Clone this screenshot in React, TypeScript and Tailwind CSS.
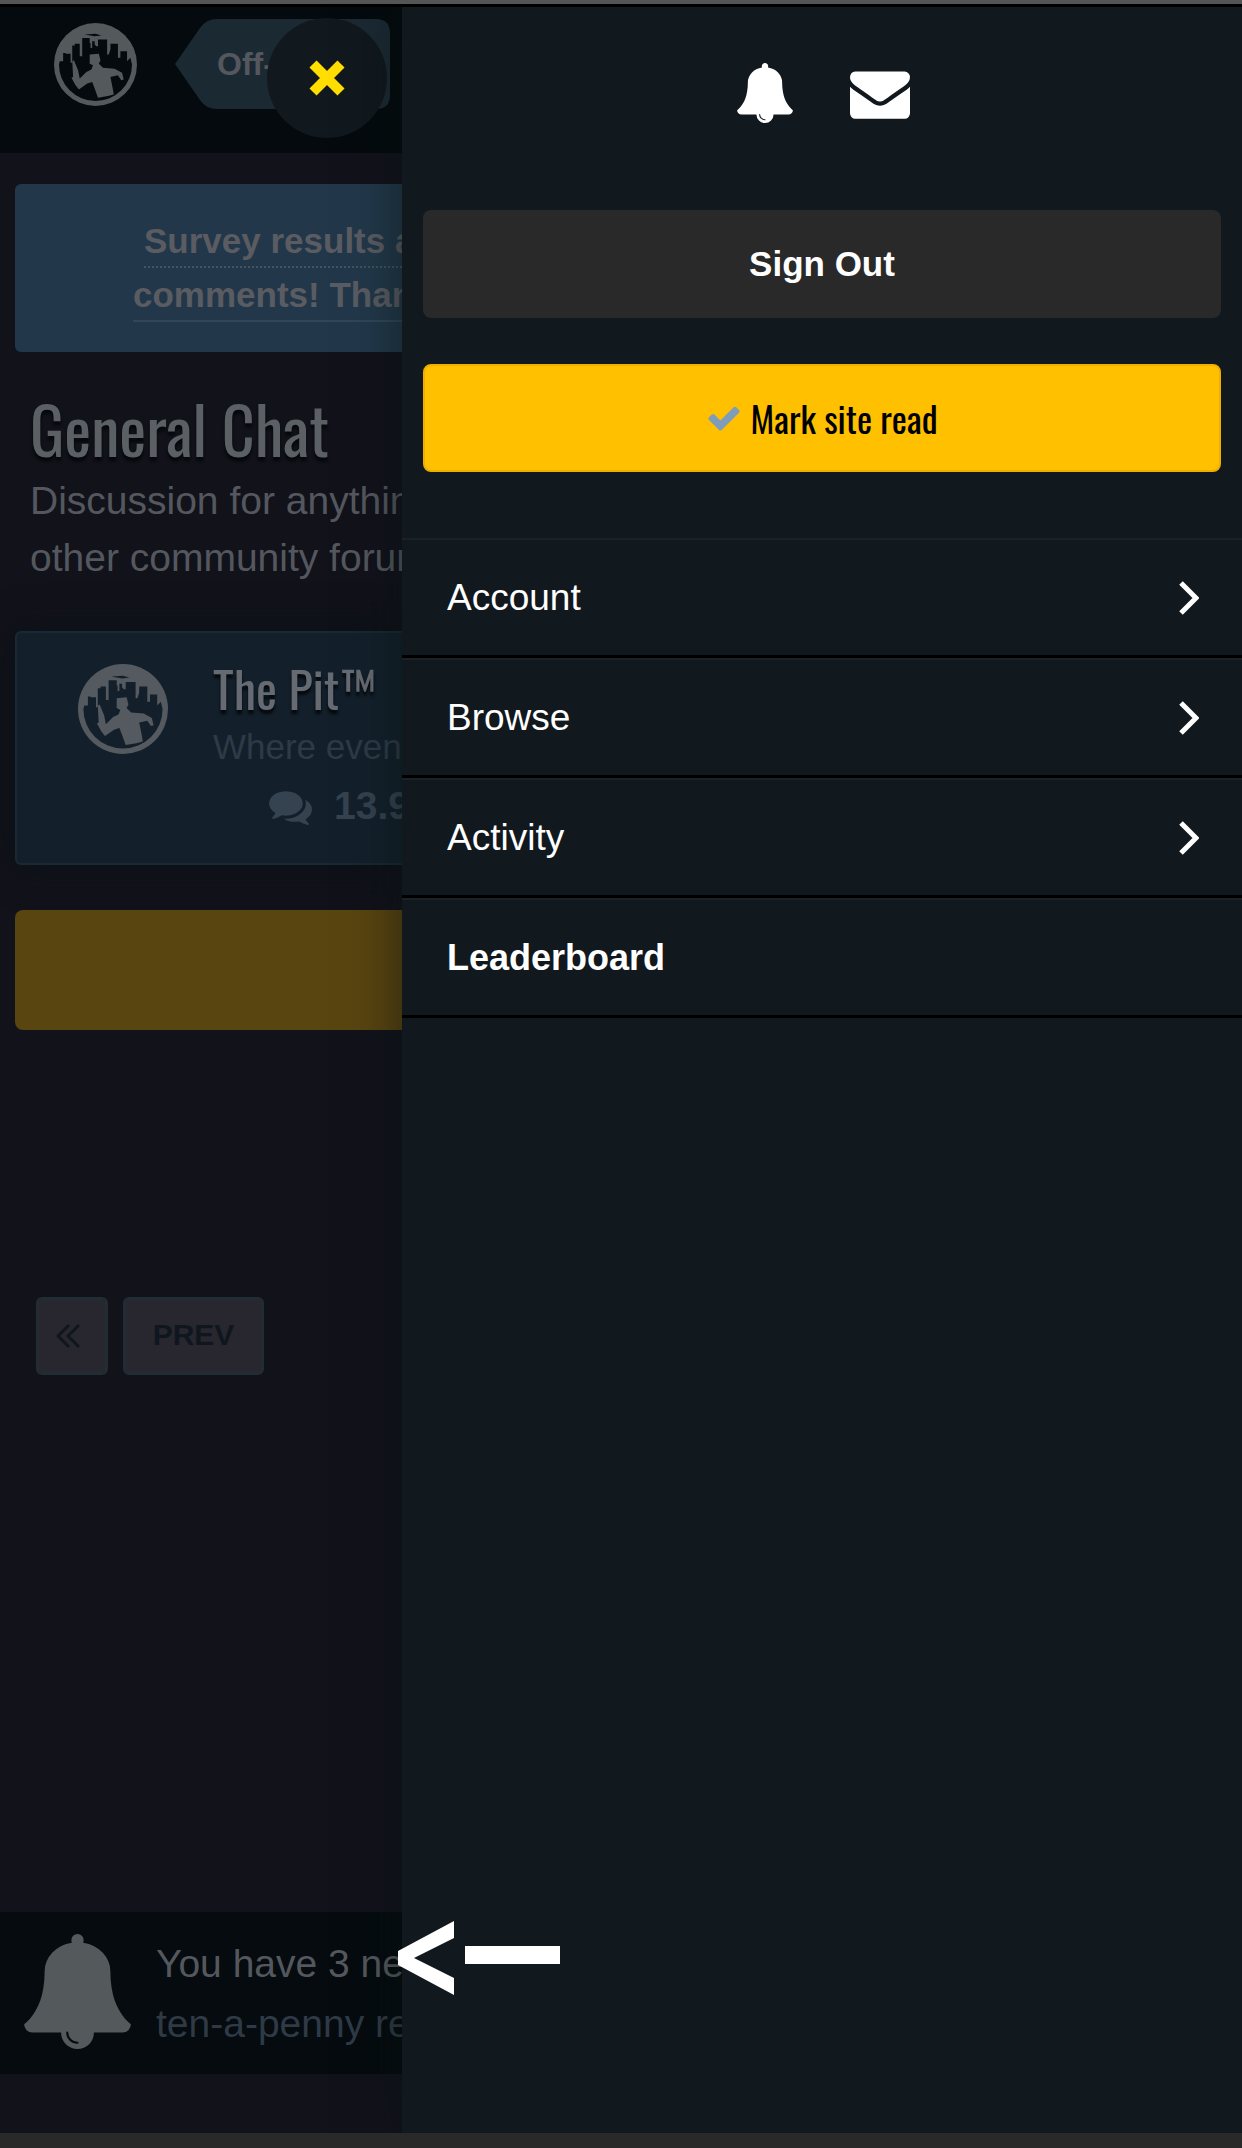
import type { ReactNode } from 'react';

const MENU: { label: string; expandable: boolean }[] = [
  { label: 'Account', expandable: true },
  { label: 'Browse', expandable: true },
  { label: 'Activity', expandable: true },
  { label: 'Leaderboard', expandable: false },
];

const BELL =
  'M912 1696q0-16-16-16-59 0-101.500-42.500t-42.500-101.500q0-16-16-16t-16 16q0 73 51.500 124.500t124.500 51.500q16 0 16-16zm816-288q0 52-38 90t-90 38h-448q0 106-75 181t-181 75-181-75-75-181h-448q-52 0-90-38t-38-90q50-42 91-88t85-119.500 74.500-158.500 50-206 19.500-260q0-152 117-282.500t307-158.500q-8-19-8-39 0-40 28-68t68-28 68 28 28 68q0 20-8 39 190 28 307 158.500t117 282.500q0 139 19.500 260t50 206 74.500 158.500 85 119.500 91 88z';
const ENVELOPE =
  'M1792 710v794q0 66-47 113t-113 47h-1472q-66 0-113-47t-47-113v-794q44 49 101 87 362 246 497 345 57 42 92.500 65.500t94.500 48 110 24.500h2q51 0 110-24.500t94.500-48 92.500-65.500q170-123 498-345 57-39 100-87zm0-294q0 79-49 151t-122 123q-376 261-468 325-10 7-42.500 31t-54 38.500-52 32.500-57.500 27-50 9h-2q-23 0-50-9t-57.500-27-52-32.500-54-38.500-42.500-31q-91-64-262-182.500t-205-142.500q-62-42-117-115.500t-55-136.500q0-78 41.500-130t118.500-52h1472q65 0 112.500 47t47.500 113z';
const CHECK =
  'M1671 566q0 40-28 68l-724 724-136 136q-28 28-68 28t-68-28l-136-136-362-362q-28-28-28-68t28-68l136-136q28-28 68-28t68 28l294 295 656-657q28-28 68-28t68 28l136 136q28 28 28 68z';
const COMMENTS =
  'M1408 768q0 139-94 257t-256.500 186.500-353.500 68.500q-86 0-176-16-124 88-278 128-36 9-86 16h-3q-11 0-20.500-8t-11.500-21q-1-3-1-6.500t.5-6.500 2-6l2.500-5 3.500-5.500 4-5 4.500-5 4-4.500q5-6 23-25t26-29.500 22.500-29 25-38.500 20.500-44q-124-72-195-177t-71-224q0-139 94-257t256.500-186.500 353.500-68.500 353.500 68.500 256.500 186.500 94 257zm384 256q0 120-71 224.500t-195 176.500q10 24 20.500 44t25 38.500 22.500 29 26 29.500 23 25q1 1 4 4.500t4.500 5 4 5 3.500 5.500l2.500 5 2 6 .5 6.500-1 6.500q-3 14-13 22t-22 7q-50-7-86-16-154-40-278-128-90 16-176 16-271 0-472-132 58 4 88 4 161 0 309-45t264-129q125-92 192-212t67-254q0-77-23-152 129 71 204 178t75 230z';

function Glyph({ d, className }: { d: string; className: string }) {
  return (
    <svg viewBox="0 0 1792 1792" fill="currentColor" className={className} aria-hidden="true">
      <path d={d} />
    </svg>
  );
}

function Stroke({ viewBox, className, children }: { viewBox: string; className: string; children: ReactNode }) {
  return (
    <svg viewBox={viewBox} fill="none" stroke="currentColor" className={className} aria-hidden="true">
      {children}
    </svg>
  );
}

// Round site badge: skyline with a figure in front
function Badge({ className, ink }: { className: string; ink: string }) {
  return (
    <svg viewBox="0 0 100 100" className={className} aria-hidden="true">
      <circle cx="50" cy="50" r="50" fill="currentColor" />
      <path
        fill={ink}
        d="M7 46 L11 46 11 36 14 36 14 37 20 37 20 48 22 48 22 27 25 27 25 25 31 25 31 40 34 40 34 18 43 18 43 24 44 24 44 30 46 30 46 22 49 22 49 26 51 28 53 28 53 20 64 20 64 38 66 38 68 32 68 25 77 25 77 42 80 42 80 34 88 34 88 46 92 42 94 50 A44 44 0 0 1 6 50 Z"
      />
      <path fill="currentColor" d="M34 15 Q46 10 60 15 L52 15 48 16 Z" />
      <path fill={ink} d="M37 14 L50 13 57 15 49 16 Z" />
      <path fill={ink} d="M41 33 L56 32 57 37 41 38 Z" />
      <path
        fill="currentColor"
        d="M43 38 L54 37 56 45 54 49 59 54 73 55 82 60 84 68 81 69 77 63 68 65 71 80 72 86 65 88 53 90 49 79 46 71 40 73 30 80 26 75 21 66 23 65 22 46 24 45 29 57 31 67 39 59 45 56 47 51 43 49 Z"
      />
    </svg>
  );
}

function Page() {
  return (
    <main className="flex w-[402px] shrink-0 flex-col overflow-hidden bg-[#12121b] whitespace-nowrap text-[#54585e]">
      <header className="relative flex h-[146px] items-start bg-[#040a0d] pt-3 pl-[54px]">
        <Badge className="mt-1 size-[83px] text-[#54595b]" ink="#040a0d" />
        <a href="#top" className="relative ml-[38px] flex h-[90px] w-[215px] items-center pl-[42px] text-[32px] font-bold">
          <svg viewBox="0 0 215 90" className="absolute inset-0 size-full" aria-hidden="true">
            <path fill="#1b2933" d="M0 45 L25 9 Q31 0 42 0 H201 Q215 0 215 14 V76 Q215 90 201 90 H42 Q31 90 25 81 Z" />
          </svg>
          <span className="relative">Off-</span>
        </a>
        <button
          type="button"
          aria-label="Close menu"
          className="absolute top-[11px] right-[15px] flex size-[120px] items-center justify-center rounded-full bg-[#11181e] text-[#ffde00]"
        >
          <Stroke viewBox="0 0 36 36" className="size-9">
            <path strokeWidth="10" d="M4 4 L32 32 M32 4 L4 32" />
          </Stroke>
        </button>
      </header>

      <section className="mt-[31px] ml-[15px] rounded-l-md bg-[#22384a] py-[30px] text-[35px] leading-[54px] font-bold text-[#5a5c62]">
        <a href="#survey" className="flex flex-col">
          <span className="ml-[129px] h-[54px] border-b-2 border-dotted border-[#46525c]">Survey results a</span>
          <span className="ml-[118px] h-[54px] border-b-2 border-[#30475a]">comments! Than</span>
        </a>
      </section>

      <section className="mt-[50px] pl-[30px]">
        <h1 className="mb-[18px] font-['Oswald','Liberation_Sans_Narrow',sans-serif] text-[64px] leading-[52px] text-[#5b6064] [text-shadow:0_4px_3px_#05080b]">
          General Chat
        </h1>
        <p className="text-[39px] leading-[57px]">
          Discussion for anythin
          <br />
          other community forum
        </p>
      </section>

      <section className="mt-[45px] ml-[15px] flex h-[234px] rounded-l-md border-2 border-r-0 border-[#182834] bg-[#13202b] pt-[31px] pl-[61px] shadow-[0_0_40px_#0a1116]">
        <Badge className="size-[90px] shrink-0 text-[#545a5f]" ink="#13202b" />
        <div className="ml-[45px]">
          <h2 className="mb-2.5 font-['Oswald','Liberation_Sans_Narrow',sans-serif] text-[50px] leading-[46px] text-[#666a72] [text-shadow:0_4px_3px_#05080b]">
            The Pit™
          </h2>
          <p className="text-[35px] leading-[54px] text-[#2e3a47]">Where even</p>
          <p className="flex items-center gap-[22px] pl-14 text-[39px] leading-[64px] font-bold text-[#35424f]">
            <Glyph d={COMMENTS} className="size-[43px]" />
            13.9
          </p>
        </div>
      </section>

      <button type="button" aria-label="New topic" className="mt-[45px] ml-[15px] h-[120px] rounded-l-lg bg-[#594510]" />

      <nav className="mt-[267px] ml-9 flex gap-[15px] text-[#10161d]">
        <button
          type="button"
          aria-label="First page"
          className="flex h-[78px] w-[72px] items-center rounded-md border-3 border-[#232b34] bg-[#282730] pl-[17px]"
        >
          <Stroke viewBox="0 0 24 26" className="h-[26px] w-6">
            <path strokeWidth="3" d="M13 2 L2 13 L13 24 M23 2 L12 13 L23 24" />
          </Stroke>
        </button>
        <button type="button" className="h-[78px] w-[141px] rounded-md border-3 border-[#232b34] bg-[#282730] pb-1 text-[30px] font-bold">
          PREV
        </button>
      </nav>

      <aside className="mt-auto mb-[59px] flex bg-[#050b0e] pt-[22px] pb-5 pl-5 text-[39px] leading-[60px]">
        <Glyph d={BELL} className="size-[115px] shrink-0 text-[#54595b]" />
        <div className="ml-[21px]">
          <p>You have 3 new</p>
          <p className="text-[#2f3a47]">ten-a-penny re</p>
        </div>
      </aside>
    </main>
  );
}

function Drawer() {
  return (
    <aside className="relative flex min-w-0 flex-1 flex-col bg-[#11181e] text-[36px] text-white shadow-[0_0_50px_#08121099]">
      <div className="flex items-center justify-center gap-[55px] pt-14">
        <a href="#notifications" aria-label="Notifications">
          <Glyph d={BELL} className="size-[60px]" />
        </a>
        <a href="#messages" aria-label="Messages">
          <Glyph d={ENVELOPE} className="size-[60px]" />
        </a>
      </div>

      <div className="mt-[87px] flex flex-col gap-[46px] px-[21px]">
        <button type="button" className="h-[108px] rounded-lg bg-[#292929] text-[35px] font-bold">
          Sign Out
        </button>
        <button
          type="button"
          className="flex h-[108px] items-center justify-center gap-2 rounded-lg border-2 border-[#efae00] bg-[#ffc000] font-['Oswald','Liberation_Sans_Narrow',sans-serif] text-black"
        >
          <Glyph d={CHECK} className="size-9 text-[#7f9db9]" />
          Mark site read
        </button>
      </div>

      <ul className="mt-[66px]">
        {MENU.map((item) => (
          <li key={item.label} className="border-t-2 border-b-3 border-t-[#1a2229] border-b-black">
            <a href="#menu" className="flex h-[115px] items-center justify-between pr-[43px] pl-[45px]">
              <span className={item.expandable ? 'text-[37px]' : 'font-bold'}>{item.label}</span>
              {item.expandable && (
                <Stroke viewBox="0 0 20 34" className="h-[34px] w-5">
                  <path strokeWidth="5" d="M2 2 L17 17 L2 32" />
                </Stroke>
              )}
            </a>
          </li>
        ))}
      </ul>

      {/* arrow pointing back at the notification toast */}
      <svg viewBox="0 0 162 74" fill="#fff" className="absolute bottom-[138px] -left-1 h-[74px] w-[162px]" aria-hidden="true">
        <path d="M56 0 V17 L16 37 L56 57 V74 L0 44 V30 Z" />
        <path d="M67 25 H162 V43 H67 Z" />
      </svg>
    </aside>
  );
}

export default function App() {
  return (
    <div className="flex min-h-screen flex-col bg-black font-['Liberation_Sans',Arial,sans-serif]">
      <div className="h-[7px] border-b-3 border-black bg-[#555]" />
      <div className="flex flex-1 overflow-hidden">
        <Page />
        <Drawer />
      </div>
      <div className="h-[15px] bg-[#292929]" />
    </div>
  );
}
